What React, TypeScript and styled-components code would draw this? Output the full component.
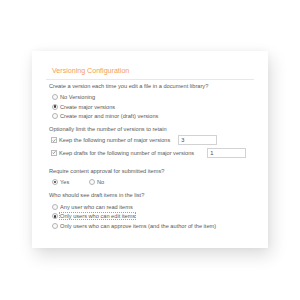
import React from "react";
import styled, { createGlobalStyle } from "styled-components";

const Global = createGlobalStyle`
  html, body { margin: 0; padding: 0; background: #ffffff; }
  body { font-family: "Liberation Sans", Arial, sans-serif; }
`;

const Page = styled.div`
  width: 300px;
  height: 300px;
  padding: 51px 0 0 32px;
  box-sizing: border-box;
  background: #fff;
`;

const Card = styled.div`
  width: 236px;
  height: 197px;
  box-sizing: border-box;
  background: #fff;
  padding: 0 14px;
  box-shadow: 3px 7px 16px rgba(0, 0, 0, 0.14), 0 0 6px rgba(0, 0, 0, 0.04);
  display: flex;
  flex-direction: column;
`;

const Header = styled.div`
  padding: 15px 0 3px 6px;
  border-bottom: 1px solid #e8e8e8;
`;

const Title = styled.div`
  font-size: 7.1px;
  line-height: 10px;
  color: #f2a055;
  white-space: nowrap;
`;

const Body = styled.div`
  padding-left: 3px;
  display: flex;
  flex-direction: column;
`;

const Question = styled.div<{ $mt: number }>`
  margin-top: ${(p) => p.$mt}px;
  height: 9px;
  line-height: 9px;
  font-size: 5.65px;
  color: #5a5a5a;
  white-space: nowrap;
`;

const Row = styled.div<{ $mt?: number; $h?: number }>`
  margin-top: ${(p) => p.$mt ?? 0}px;
  height: ${(p) => p.$h ?? 9.5}px;
  display: flex;
  align-items: center;
  padding-left: 3px;
  font-size: 5.65px;
  color: #5a5a5a;
  white-space: nowrap;
`;

const Radio = styled.span<{ $on?: boolean }>`
  width: 6px;
  height: 6px;
  box-sizing: border-box;
  border-radius: 50%;
  border: 0.5px solid #b4b4b4;
  background: #fafafa;
  margin-right: 2px;
  display: inline-flex;
  align-items: center;
  justify-content: center;
  flex: none;
  &::after {
    content: "";
    width: 2.6px;
    height: 2.6px;
    border-radius: 50%;
    background: ${(p) => (p.$on ? "#3a3a3a" : "transparent")};
  }
`;

const Check = styled.span`
  width: 6px;
  height: 6px;
  box-sizing: border-box;
  border: 0.5px solid #bbbbbb;
  background: #fbfbfb;
  margin-right: 2px;
  margin-left: -1px;
  display: inline-flex;
  align-items: center;
  justify-content: center;
  flex: none;
`;

const Label = styled.span<{ $focus?: boolean }>`
  ${(p) => (p.$focus ? "outline: 0.5px dotted #a0a0a0; outline-offset: 0px;" : "")}
`;

const NumBox = styled.span<{ $gap: number }>`
  margin-left: ${(p) => p.$gap}px;
  width: 39px;
  height: 10px;
  box-sizing: border-box;
  border: 0.6px solid #d2d2d2;
  padding-left: 2px;
  display: inline-flex;
  align-items: center;
  font-size: 5.65px;
  color: #444;
  flex: none;
`;

const Choice = styled.span<{ $w?: number }>`
  display: inline-flex;
  align-items: center;
  width: ${(p) => (p.$w ? `${p.$w}px` : "auto")};
`;

const CheckMark = () => (
  <svg width="5" height="5" viewBox="0 0 10 10">
    <path d="M1.8 5.2 L4 7.6 L8.6 2" fill="none" stroke="#444" strokeWidth="1.3" />
  </svg>
);

export default function App() {
  return (
    <>
      <Global />
      <Page>
        <Card>
          <Header>
            <Title>Versioning Configuration</Title>
          </Header>
          <Body>
            <Question $mt={2}>Create a version each time you edit a file in a document library?</Question>
            <Row $mt={1.5}>
              <Radio />
              <Label>No Versioning</Label>
            </Row>
            <Row>
              <Radio $on />
              <Label>Create major versions</Label>
            </Row>
            <Row>
              <Radio />
              <Label>Create major and minor (draft) versions</Label>
            </Row>
            <Question $mt={3.5}>Optionally limit the number of versions to retain</Question>
            <Row $mt={0.5} $h={12}>
              <Check>
                <CheckMark />
              </Check>
              <Label>Keep the following number of major versions</Label>
              <NumBox $gap={8}>3</NumBox>
            </Row>
            <Row $mt={0.5} $h={12}>
              <Check>
                <CheckMark />
              </Check>
              <Label>Keep drafts for the following number of major versions</Label>
              <NumBox $gap={13}>1</NumBox>
            </Row>
            <Question $mt={8}>Require content approval for submitted items?</Question>
            <Row $mt={1.5} $h={10}>
              <Choice $w={37}>
                <Radio $on />
                <Label>Yes</Label>
              </Choice>
              <Choice>
                <Radio />
                <Label>No</Label>
              </Choice>
            </Row>
            <Question $mt={3.5}>Who should see draft items in the list?</Question>
            <Row $mt={2.5}>
              <Radio />
              <Label>Any user who can read items</Label>
            </Row>
            <Row>
              <Radio $on />
              <Label $focus>Only users who can edit items</Label>
            </Row>
            <Row>
              <Radio />
              <Label>Only users who can approve items (and the author of the item)</Label>
            </Row>
          </Body>
        </Card>
      </Page>
    </>
  );
}
